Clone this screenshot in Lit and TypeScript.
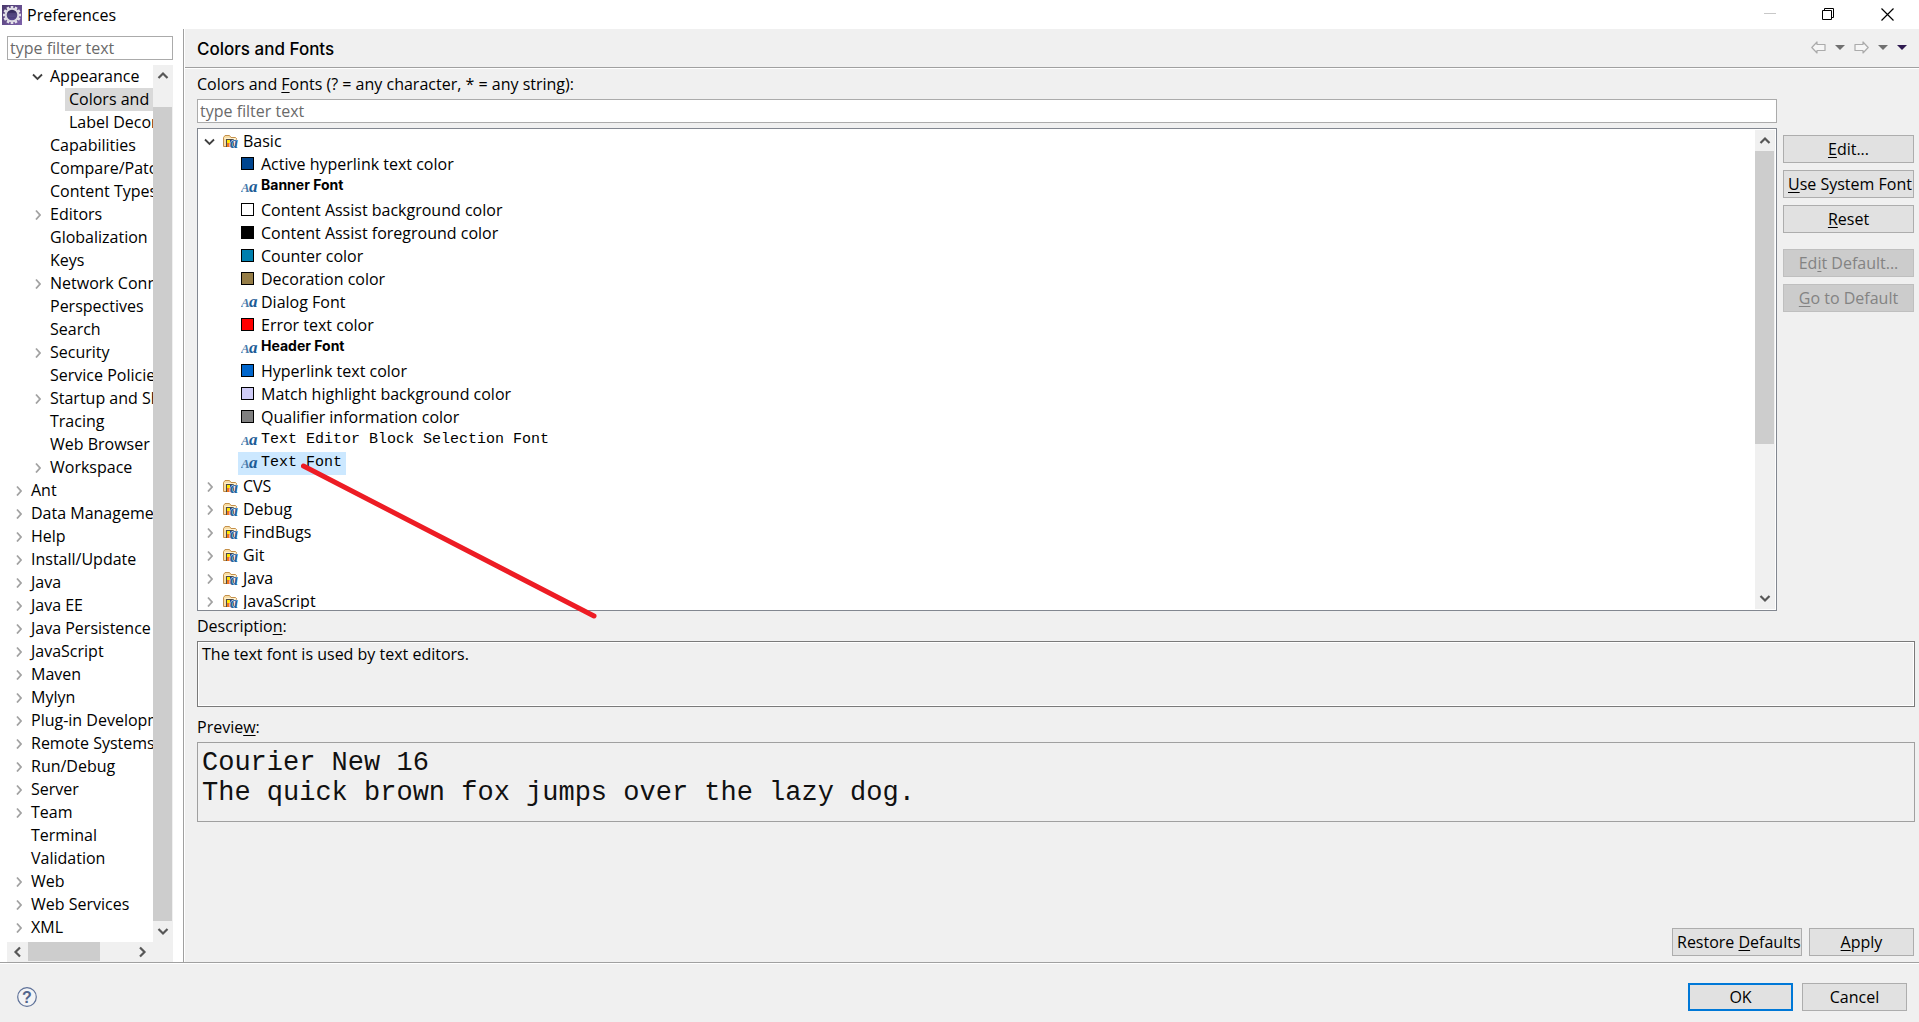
import { LitElement, html, css, svg, nothing } from "lit";
import { customElement, property } from "lit/decorators.js";
import { classMap } from "lit/directives/class-map.js";
import { styleMap } from "lit/directives/style-map.js";

type Expand = "open" | "closed" | "none";

interface NavItem {
  label: string;
  level: 1 | 2 | 3;
  expand: Expand;
  selected?: boolean;
}

const nav = (label: string, level: 1 | 2 | 3, expand: Expand = "none", selected = false): NavItem => ({
  label,
  level,
  expand,
  selected,
});

const NAV: NavItem[] = [
  nav("Appearance", 2, "open"),
  nav("Colors and Fonts", 3, "none", true),
  nav("Label Decorations", 3),
  nav("Capabilities", 2),
  nav("Compare/Patch", 2),
  nav("Content Types", 2),
  nav("Editors", 2, "closed"),
  nav("Globalization", 2),
  nav("Keys", 2),
  nav("Network Connections", 2, "closed"),
  nav("Perspectives", 2),
  nav("Search", 2),
  nav("Security", 2, "closed"),
  nav("Service Policies", 2),
  nav("Startup and Shutdown", 2, "closed"),
  nav("Tracing", 2),
  nav("Web Browser", 2),
  nav("Workspace", 2, "closed"),
  nav("Ant", 1, "closed"),
  nav("Data Management", 1, "closed"),
  nav("Help", 1, "closed"),
  nav("Install/Update", 1, "closed"),
  nav("Java", 1, "closed"),
  nav("Java EE", 1, "closed"),
  nav("Java Persistence", 1, "closed"),
  nav("JavaScript", 1, "closed"),
  nav("Maven", 1, "closed"),
  nav("Mylyn", 1, "closed"),
  nav("Plug-in Development", 1, "closed"),
  nav("Remote Systems", 1, "closed"),
  nav("Run/Debug", 1, "closed"),
  nav("Server", 1, "closed"),
  nav("Team", 1, "closed"),
  nav("Terminal", 1),
  nav("Validation", 1),
  nav("Web", 1, "closed"),
  nav("Web Services", 1, "closed"),
  nav("XML", 1, "closed"),
];

interface ThemeItem {
  label: string;
  color?: string;
  face?: "dialog" | "banner" | "mono";
  selected?: boolean;
}

const BASIC: ThemeItem[] = [
  { label: "Active hyperlink text color", color: "#00458f" },
  { label: "Banner Font", face: "banner" },
  { label: "Content Assist background color", color: "#ffffff" },
  { label: "Content Assist foreground color", color: "#000000" },
  { label: "Counter color", color: "#007fae" },
  { label: "Decoration color", color: "#957d47" },
  { label: "Dialog Font", face: "dialog" },
  { label: "Error text color", color: "#ff0000" },
  { label: "Header Font", face: "banner" },
  { label: "Hyperlink text color", color: "#0066cc" },
  { label: "Match highlight background color", color: "#cecbf6" },
  { label: "Qualifier information color", color: "#808080" },
  { label: "Text Editor Block Selection Font", face: "mono" },
  { label: "Text Font", face: "mono", selected: true },
];

const CATEGORIES = ["CVS", "Debug", "FindBugs", "Git", "Java", "JavaScript"];

const twisty = (state: Expand) =>
  state === "open"
    ? html`<svg width="11" height="9" viewBox="0 0 11 9" aria-hidden="true"><path d="M1 2.500l4.500 4.500L10 2.500" fill="none" stroke="#404040" stroke-width="1.800"/></svg>`
    : state === "closed"
      ? html`<svg width="6" height="11" viewBox="0 0 6 11" aria-hidden="true"><path d="M1 1.500l4 4.500-4 4.500" fill="none" stroke="#a2a2a2" stroke-width="1.800"/></svg>`
      : nothing;

const folderIcon = html`<svg width="16" height="16" viewBox="0 0 16 16" aria-hidden="true">
  <path d="M.5 12.500V3.500L2 1.500h4.500L8 3.500h4.500l1 1v8z" fill="#f7dca4" stroke="#c4904a" />
  <path d="M1.500 4.500h11" stroke="#fff1cf" />
  <rect x="3" y="5" width="8" height="8" fill="#4d4a45" />
  <rect x="4" y="6" width="3" height="3" fill="#ffe400" />
  <rect x="7" y="6" width="4" height="3" fill="#23408e" />
  <rect x="4" y="9" width="3" height="4" fill="#f07818" />
  <text x="7" y="14" class="badge">a</text>
</svg>`;

const fontIcon = html`<svg width="17" height="12" viewBox="0 0 17 12" aria-hidden="true">
  <text x="0" y="10" class="aa">A</text>
  <text x="8" y="10" class="aa-strong">a</text>
</svg>`;

const scrollArrow = (direction: "up" | "down" | "left" | "right") => {
  const paths = {
    up: "M1.500 8L6 3.500 10.500 8",
    down: "M1.500 3L6 7.500 10.500 3",
    left: "M8 1.500L3.500 6 8 10.500",
    right: "M3 1.500L7.500 6 3 10.500",
  };
  return html`<svg width="12" height="12" viewBox="0 0 12 12" aria-hidden="true">
    <path d=${paths[direction]} fill="none" stroke="#575757" stroke-width="2.200" />
  </svg>`;
};

@customElement("scroll-track")
export class ScrollTrack extends LitElement {
  @property({ reflect: true }) orientation: "vertical" | "horizontal" = "vertical";
  @property({ type: Number }) start = 0;
  @property({ type: Number }) size = 50;

  static styles = css`
    :host {
      display: flex;
      flex-direction: column;
      flex: none;
      width: 20px;
      background: #f0f0f0;
    }
    :host([orientation="horizontal"]) {
      flex-direction: row;
      width: auto;
      height: 20px;
    }
    button {
      display: flex;
      align-items: center;
      justify-content: center;
      flex: none;
      width: 19px;
      height: 21px;
      padding: 0;
      border: 0;
      background: transparent;
    }
    svg {
      display: block;
    }
    :host([orientation="horizontal"]) button {
      width: 21px;
      height: 19px;
    }
    .track {
      display: flex;
      flex-direction: column;
      flex: 1;
      min-width: 0;
      min-height: 0;
    }
    :host([orientation="horizontal"]) .track {
      flex-direction: row;
    }
    .lead {
      flex: none;
    }
    .thumb {
      flex: none;
      width: 19px;
      height: 19px;
      background: #cdcdcd;
    }
  `;

  render() {
    const vertical = this.orientation === "vertical";
    const side = vertical ? "height" : "width";
    return html`
      <button aria-label=${vertical ? "Scroll up" : "Scroll left"} tabindex="-1">${scrollArrow(vertical ? "up" : "left")}</button>
      <div class="track">
        <div class="lead" style=${styleMap({ [side]: `${this.start}%` })}></div>
        <div class="thumb" style=${styleMap({ [side]: `${this.size}%` })}></div>
      </div>
      <button aria-label=${vertical ? "Scroll down" : "Scroll right"} tabindex="-1">${scrollArrow(vertical ? "down" : "right")}</button>
    `;
  }
}

@customElement("app-root")
export class AppRoot extends LitElement {
  static styles = css`
    :host {
      display: flex;
      flex-direction: column;
      height: 100vh;
      overflow: hidden;
      background: #f0f0f0;
      color: #000;
      font: 16px/22px "Open Sans", "Noto Sans", sans-serif;
    }
    * {
      box-sizing: border-box;
    }
    svg {
      display: block;
      flex: none;
    }
    button,
    input {
      font: inherit;
      color: inherit;
      border-radius: 0;
      margin: 0;
    }
    u {
      text-decoration: underline;
      text-decoration-thickness: 1px;
      text-underline-offset: 2px;
    }
    ul {
      list-style: none;
      margin: 0;
      padding: 0;
    }

    .titlebar {
      display: flex;
      align-items: center;
      flex: none;
      height: 29px;
      padding: 0 2px;
      background: #fff;
    }
    .titlebar h1 {
      flex: 1;
      margin: 0 0 0 5px;
      font-size: 16px;
      font-weight: 400;
    }
    .caption {
      display: flex;
      align-items: center;
      justify-content: center;
      width: 59px;
      height: 28px;
      padding: 0;
      border: 0;
      background: transparent;
    }

    .body {
      display: flex;
      flex: 1;
      min-height: 0;
    }
    .sidebar {
      display: flex;
      flex-direction: column;
      flex: none;
      width: 184px;
      padding: 7px 10px 0 7px;
      border-right: 1px solid #a0a0a0;
      background: #fff;
    }
    .filter {
      display: block;
      width: 100%;
      height: 24px;
      padding: 0 2px;
      border: 1px solid #ababab;
      background: #fff;
      outline: none;
    }
    .filter::placeholder {
      color: #6a6a6a;
      opacity: 1;
    }
    .nav-box {
      display: flex;
      flex: 1;
      min-height: 0;
      margin-top: 5px;
    }
    .nav {
      flex: 1;
      min-width: 0;
      overflow: hidden;
    }
    .corner {
      padding-right: 20px;
      background: #f0f0f0;
    }

    .row {
      display: flex;
      height: 23px;
      line-height: 23px;
      white-space: nowrap;
    }
    .twisty {
      display: flex;
      align-items: center;
      justify-content: center;
      flex: none;
      width: 19px;
      height: 23px;
    }
    .nav .row {
      padding-left: 2px;
    }
    .nav .level-2 {
      padding-left: 21px;
    }
    .nav .level-3 {
      padding-left: 40px;
    }
    .nav .label {
      padding: 0 4px 0 3px;
    }
    .nav .level-3 .twisty {
      width: 18px;
    }
    .nav .level-3 .label {
      padding-left: 4px;
    }
    .nav .selected .label {
      background: #d9d9d9;
    }

    .page {
      display: flex;
      flex-direction: column;
      flex: 1;
      min-width: 0;
      border-left: 1px solid #fff;
    }
    .page-head {
      display: flex;
      align-items: center;
      flex: none;
      height: 39px;
      padding: 0 12px;
      border-bottom: 1px solid #a0a0a0;
      box-shadow: 0 1px #fff;
    }
    .page-head h2 {
      flex: 1;
      margin: 0;
      font: 500 17px/24px Inter, "Liberation Sans", sans-serif;
      padding-top: 2px;
    }
    .history {
      display: flex;
      align-items: center;
      gap: 9px;
      padding-bottom: 2px;
    }
    .history button {
      padding: 0;
      border: 0;
      background: transparent;
    }
    .content {
      display: flex;
      flex-direction: column;
      flex: 1;
      min-height: 0;
      padding: 5px 4px 6px 12px;
    }
    .caption-label {
      display: block;
      height: 26px;
    }
    .chooser {
      display: flex;
      gap: 6px;
    }
    .chooser-main {
      position: relative;
      flex: 1;
      min-width: 0;
    }
    .theme-box {
      display: flex;
      height: calc(21 * 23px);
      margin-top: 5px;
      padding: 1px;
      border: 1px solid #828790;
      background: #fff;
      overflow: hidden;
    }
    .themes {
      flex: 1;
      min-width: 0;
      overflow: hidden;
      padding-left: 1px;
    }
    .folder {
      display: flex;
      align-items: center;
      width: 24px;
      padding-left: 4px;
    }
    .entry {
      display: flex;
      width: fit-content;
      margin-left: 38px;
      padding: 0 4px 0 3px;
    }
    .entry.selected {
      background: #cce8ff;
    }
    .icon {
      width: 20px;
      padding-top: 4px;
      flex: none;
    }
    .icon.font {
      padding-top: 6px;
    }
    .swatch {
      width: 13px;
      height: 13px;
      border: 1px solid #000;
    }
    .banner {
      font: 700 14px/18px Inter, "Liberation Sans", sans-serif;
    }
    .mono {
      font: 15px/22px "Liberation Mono", monospace;
    }
    .aa {
      font: italic 700 13px "Liberation Serif", serif;
      fill: #4a7cac;
    }
    .aa-strong {
      font: italic 700 17px "Liberation Serif", serif;
      fill: #1d5c96;
    }
    .badge {
      font: italic 700 16px "Liberation Serif", serif;
      fill: #2563a0;
      stroke: #fff;
      stroke-width: 1px;
      paint-order: stroke;
    }
    .mark {
      position: absolute;
      left: 104px;
      top: 390px;
      pointer-events: none;
    }

    .btn {
      display: block;
      height: 28px;
      padding: 0 4px;
      border: 1px solid #adadad;
      background: #e1e1e1;
      line-height: 24px;
      text-align: center;
      white-space: nowrap;
    }
    .btn:disabled {
      border-color: #bfbfbf;
      background: #ccc;
      color: #838383;
    }
    .btn.wide {
      width: 130px;
    }
    .btn.std {
      width: 105px;
    }
    .btn.default {
      border: 2px solid #0078d7;
      line-height: 22px;
    }
    .actions {
      display: flex;
      flex-direction: column;
      flex: none;
      gap: 7px;
      width: 131px;
      margin: 62px 1px 0 0;
    }
    .gap-above {
      margin-top: 9px;
    }

    .description-label {
      display: block;
      margin-top: 4px;
      height: 26px;
    }
    .description {
      height: 66px;
      padding: 1px 4px;
      border: 1px solid #7a7a7a;
      box-shadow: inset 0 0 0 1px #fff;
    }
    .preview-label {
      display: block;
      margin-top: 9px;
      height: 26px;
    }
    .preview {
      height: 80px;
      padding: 5px 4px;
      border: 1px solid #a0a0a0;
      font: 27px/30px "Liberation Mono", monospace;
      color: #111;
      overflow: hidden;
    }
    .page-buttons {
      display: flex;
      justify-content: flex-end;
      gap: 7px;
      margin: auto 1px 0 0;
    }

    .footer {
      display: flex;
      align-items: center;
      flex: none;
      gap: 9px;
      height: 60px;
      padding: 8px 12px 0 17px;
      border-top: 1px solid #a0a0a0;
      box-shadow: inset 0 1px #fff;
    }
    .footer .btn {
      align-self: flex-start;
      margin-top: 12px;
    }
    .footer .default {
      margin-right: 0;
    }
    .help {
      margin-right: auto;
      padding: 0;
      border: 0;
      background: transparent;
    }
    .question {
      font: 700 16px "Liberation Sans", sans-serif;
      fill: #52658c;
    }
  `;

  private renderNav(item: NavItem) {
    return html`<li
      role="treeitem"
      aria-selected=${item.selected ? "true" : "false"}
      class=${classMap({ row: true, [`level-${item.level}`]: true, selected: !!item.selected })}
    >
      <span class="twisty">${twisty(item.expand)}</span><span class="label">${item.label}</span>
    </li>`;
  }

  private renderCategory(label: string, state: Expand) {
    return html`<li role="treeitem" class="row">
      <span class="twisty">${twisty(state)}</span><span class="folder">${folderIcon}</span><span>${label}</span>
    </li>`;
  }

  private renderEntry(item: ThemeItem) {
    return html`<li role="treeitem" aria-selected=${item.selected ? "true" : "false"} class="row">
      <span class=${classMap({ entry: true, selected: !!item.selected })}>
        ${item.color
          ? html`<span class="icon"><div class="swatch" style=${styleMap({ background: item.color })}></div></span>`
          : html`<span class="icon font">${fontIcon}</span>`}
        <span class=${item.face ?? "dialog"}>${item.label}</span>
      </span>
    </li>`;
  }

  private renderTitlebar() {
    const teeth = Array.from({ length: 12 }, (_, i) => i * 30);
    return html`<header class="titlebar">
      <svg width="20" height="20" viewBox="0 0 20 20" aria-hidden="true">
        <defs>
          <linearGradient id="bg" x1="0" y1="0" x2="1" y2="1">
            <stop offset="0" stop-color="#49386c" />
            <stop offset="1" stop-color="#7f63ac" />
          </linearGradient>
          <linearGradient id="core" x1="0" y1="0" x2="0" y2="1">
            <stop offset="0" stop-color="#2b2350" />
            <stop offset="1" stop-color="#5b4c92" />
          </linearGradient>
        </defs>
        <rect width="20" height="20" fill="url(#bg)" />
        ${teeth.map((a) => svg`<rect x="8.700" y="1" width="2.600" height="4" fill="#e4e1ea" transform="rotate(${a} 10 10)"/>`)}
        <circle cx="10" cy="10" r="6.300" fill="url(#core)" stroke="#dedbe4" stroke-width="2" />
        <path d="M5 9h10M5 11h10" stroke="#6a5f98" stroke-width=".7" />
      </svg>
      <h1>Preferences</h1>
      <button class="caption" aria-label="Minimize" disabled>
        <svg width="12" height="13" viewBox="0 0 12 13"><path d="M0 5.500h12" stroke="#c8c8c8" /></svg>
      </button>
      <button class="caption" aria-label="Restore">
        <svg width="13" height="13" viewBox="0 0 13 13">
          <path d="M.5 2.500h9v9h-9zM2.500 2.500v-2h9v9h-2" fill="none" stroke="#000" />
        </svg>
      </button>
      <button class="caption" aria-label="Close">
        <svg width="13" height="13" viewBox="0 0 13 13"><path d="M.5.5l12 12M12.500.5l-12 12" stroke="#000" stroke-width="1.200" /></svg>
      </button>
    </header>`;
  }

  private renderHistory() {
    const drop = (fill: string) =>
      html`<svg width="10" height="12" viewBox="0 0 10 12"><path d="M0 4h10l-5 5z" fill=${fill} /></svg>`;
    return html`<nav class="history" aria-label="History">
      <button aria-label="Back" disabled>
        <svg width="15" height="13" viewBox="0 0 15 13">
          <path d="M.8 6.500l5.200-5.500v2.500h8v6H6V12z" fill="#f6f6f6" stroke="#ababab" stroke-width="1.200" stroke-linejoin="round" />
        </svg>
      </button>
      <button aria-label="Back menu" disabled>${drop("#707070")}</button>
      <button aria-label="Forward" disabled>
        <svg width="15" height="13" viewBox="0 0 15 13">
          <path d="M14.200 6.500L9 1v2.500H1v6h8V12z" fill="#f6f6f6" stroke="#ababab" stroke-width="1.200" stroke-linejoin="round" />
        </svg>
      </button>
      <button aria-label="Forward menu" disabled>${drop("#707070")}</button>
      <button aria-label="View menu">${drop("#2f1a50")}</button>
    </nav>`;
  }

  render() {
    return html`
      ${this.renderTitlebar()}
      <div class="body">
        <aside class="sidebar">
          <input class="filter" type="text" placeholder="type filter text" aria-label="Filter preferences" />
          <div class="nav-box">
            <ul class="nav" role="tree" aria-label="Preference pages">
              ${NAV.map((item) => this.renderNav(item))}
            </ul>
            <scroll-track .start=${2.5} .size=${97.5}></scroll-track>
          </div>
          <div class="corner"><scroll-track orientation="horizontal" .size=${69}></scroll-track></div>
        </aside>
        <main class="page">
          <div class="page-head">
            <h2>Colors and Fonts</h2>
            ${this.renderHistory()}
          </div>
          <div class="content">
            <div class="chooser">
              <div class="chooser-main">
                <label class="caption-label" for="theme-filter">Colors and <u>F</u>onts (? = any character, * = any string):</label>
                <input id="theme-filter" class="filter" type="text" placeholder="type filter text" />
                <div class="theme-box">
                  <ul class="themes" role="tree" aria-label="Colors and fonts">
                    ${this.renderCategory("Basic", "open")} ${BASIC.map((item) => this.renderEntry(item))}
                    ${CATEGORIES.map((label) => this.renderCategory(label, "closed"))}
                  </ul>
                  <scroll-track .size=${67}></scroll-track>
                </div>
                <svg class="mark" width="296" height="156" viewBox="0 0 296 156" aria-hidden="true">
                  <path d="M2.500 3L293 153" stroke="#ed1c24" stroke-width="5" stroke-linecap="round" />
                </svg>
              </div>
              <div class="actions">
                <button class="btn"><u>E</u>dit...</button>
                <button class="btn"><u>U</u>se System Font</button>
                <button class="btn"><u>R</u>eset</button>
                <button class="btn gap-above" disabled>Ed<u>i</u>t Default...</button>
                <button class="btn" disabled><u>G</u>o to Default</button>
              </div>
            </div>
            <span class="description-label" id="description-label">Descriptio<u>n</u>:</span>
            <div class="description" role="region" aria-labelledby="description-label">The text font is used by text editors.</div>
            <span class="preview-label" id="preview-label">Previe<u>w</u>:</span>
            <div class="preview" role="region" aria-labelledby="preview-label">
              <div>Courier New 16</div>
              <div>The quick brown fox jumps over the lazy dog.</div>
            </div>
            <div class="page-buttons">
              <button class="btn wide">Restore <u>D</u>efaults</button>
              <button class="btn std"><u>A</u>pply</button>
            </div>
          </div>
        </main>
      </div>
      <footer class="footer">
        <button class="help" aria-label="Help">
          <svg width="20" height="20" viewBox="0 0 20 20">
            <circle cx="10" cy="10" r="9.300" fill="#f3f4f6" stroke="#5f7299" stroke-width="1.200" />
            <text x="10" y="16" text-anchor="middle" class="question">?</text>
          </svg>
        </button>
        <button class="btn std default">OK</button>
        <button class="btn std">Cancel</button>
      </footer>
    `;
  }
}
